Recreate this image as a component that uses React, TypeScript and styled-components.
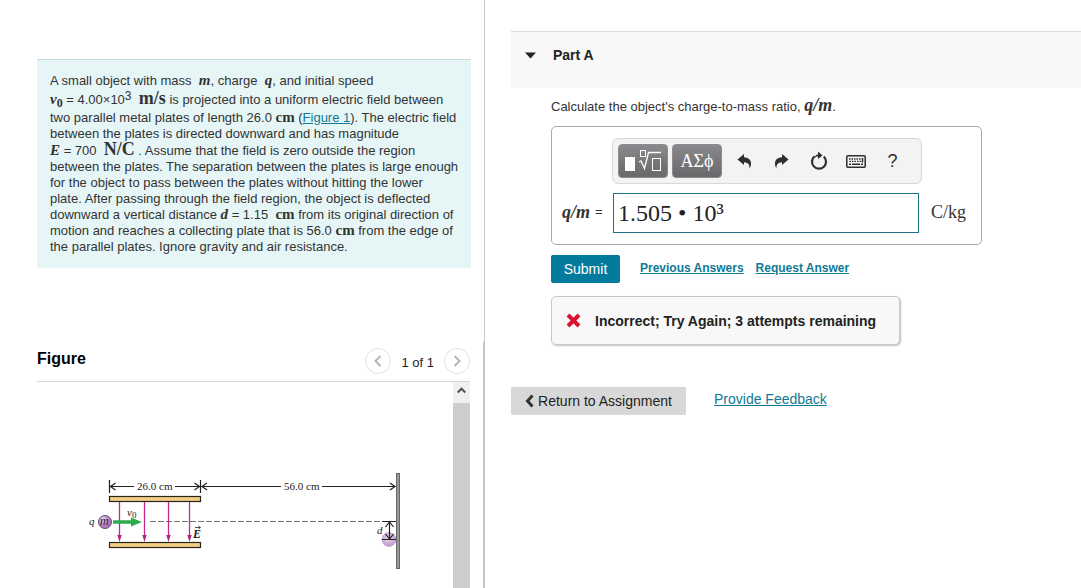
import React from "react";
import styled, { createGlobalStyle, css } from "styled-components";

const sans = `"Liberation Sans", Arial, sans-serif`;
const serif = `"Liberation Serif", "Times New Roman", serif`;

const GlobalStyle = createGlobalStyle`
  *, *::before, *::after { box-sizing: border-box; }
  body { margin: 0; background: #fff; color: #333; font-family: ${sans}; font-size: 13px; line-height: 16px; }
  button, input { font-family: inherit; }
  p, h1, h2 { margin: 0; }
`;

const Page = styled.div`
  display: grid;
  grid-template-columns: 485fr 596fr;
  min-height: 100vh;
`;

const ProblemColumn = styled.div`
  display: flex;
  flex-direction: column;
  min-width: 0;
  padding-top: 59px;
  border-right: 1px solid #c4c7c9;
`;

const Problem = styled.section`
  margin: 0 13px 0 37px;
  padding: 13px 0 13px 13px;
  border-top: 1px solid #c9dcdc;
  background: #e6f6f7;
  white-space: nowrap;
`;

const Line = styled.span<{ $height?: number }>`
  display: block;
  height: ${(p) => p.$height ?? 16}px;
  line-height: ${(p) => p.$height ?? 16}px;
`;

const Math = styled.span<{ $size?: number; $italic?: boolean; $weight?: number }>`
  font-family: ${serif};
  font-size: ${(p) => p.$size ?? 15}px;
  font-style: ${(p) => (p.$italic ? "italic" : "normal")};
  font-weight: ${(p) => p.$weight ?? 700};
  line-height: 0;
`;

const Sup = styled.sup`
  font-size: 12px;
  line-height: 0;
  vertical-align: 4px;
`;

const Sub = styled.sub`
  font-size: 12px;
  font-style: normal;
  line-height: 0;
  vertical-align: -3px;
`;

const Link = styled.a<{ $kind?: "strong" | "large" }>`
  color: #0f7a96;
  text-decoration: underline;
  ${(p) => p.$kind === "strong" && css`font-size: 12px; font-weight: 700;`}
  ${(p) => p.$kind === "large" && css`font-size: 14px;`}
`;

const FigurePanel = styled.section`
  display: flex;
  flex: 1;
  flex-direction: column;
  margin-top: 74px;
  padding-left: 37px;
  padding-right: 13px;
  border-right: 1px solid #c4c7c9;
`;

const FigureHeader = styled.header`
  display: flex;
  align-items: center;
  justify-content: space-between;
  height: 40px;
  padding-bottom: 2px;
  border-bottom: 1px solid #d6d6d6;
`;

const FigureTitle = styled.h2`
  color: #000;
  font-size: 16px;
  line-height: 20px;
  padding-bottom: 4px;
`;

const Pager = styled.div`
  display: flex;
  align-items: center;
  gap: 10px;
  color: #222;
`;

const PagerButton = styled.button`
  display: grid;
  place-items: center;
  width: 26px;
  height: 26px;
  padding: 0;
  border: 1px solid #e2dfe2;
  border-radius: 50%;
  background: #fff;
`;

const PageCount = styled.span`
  padding-top: 4px;
`;

const FigureBody = styled.div`
  display: flex;
  flex: 1;
  justify-content: space-between;
`;

const Drawing = styled.svg`
  display: block;
  margin: 83px 0 12px 43px;
`;

const ScrollTrack = styled.div`
  display: flex;
  flex-direction: column;
  width: 17px;
  background: #cdcdcd;
`;

const ScrollButton = styled.button`
  display: grid;
  place-items: center;
  height: 21px;
  padding: 0 0 4px;
  border: 0;
  background: #f0f0f0;
`;

const AnswerColumn = styled.main`
  min-width: 0;
  padding: 31px 0 20px 26px;
`;

const PartHeader = styled.header`
  display: flex;
  align-items: flex-start;
  gap: 17px;
  height: 57px;
  padding: 15px 14px;
  border-top: 1px solid #dcdcdc;
  background: #f8f8f8;
`;

const PartToggle = styled.button`
  display: grid;
  place-items: center;
  width: 11px;
  height: 16px;
  padding: 0;
  border: 0;
  background: none;
`;

const PartTitle = styled.h1`
  color: #222;
  font-size: 14px;
  line-height: 16px;
`;

const PartBody = styled.div`
  padding: 11px 12px 0 40px;
`;

const AnswerBox = styled.div`
  width: fit-content;
  max-width: 100%;
  margin-top: 11px;
  padding: 11px 15px 11px 10px;
  border: 1px solid #aaa;
  border-radius: 5px;
`;

const Toolbar = styled.div`
  display: flex;
  align-items: center;
  width: 310px;
  height: 46px;
  margin-left: 50px;
  padding: 0 10px 0 5px;
  border: 1px solid #d8d8d8;
  border-radius: 6px;
  background: #f3f3f3;
`;

const PaletteButton = styled.button`
  display: grid;
  place-items: center;
  width: 50px;
  height: 34px;
  margin-right: 4px;
  padding: 0;
  border: 1px solid #8b8b8f;
  border-radius: 4px;
  background: linear-gradient(#8a8a8d, #68686b);
  color: #fff;
  font-family: ${serif};
  font-size: 18px;
`;

const ToolButton = styled.button`
  display: grid;
  flex: 1;
  place-items: center;
  height: 34px;
  padding: 0;
  border: 0;
  background: none;
  color: #2f2f2f;
  font-size: 18px;
`;

const EntryRow = styled.div`
  display: flex;
  align-items: center;
  margin-top: 9px;
`;

const EntryLabel = styled.label`
  display: flex;
  align-items: center;
  gap: 5px;
  width: 51px;
  padding-bottom: 2px;
  white-space: nowrap;
`;

const Entry = styled.input`
  width: 306px;
  height: 40px;
  padding: 0 4px;
  border: 1px solid #1d7386;
  background: #fff;
  color: #222;
  font-family: ${serif};
  font-size: 24px;
`;

const Unit = styled.span`
  margin-left: 12px;
  padding-bottom: 3px;
  font-family: ${serif};
  font-size: 18px;
`;

const Actions = styled.div`
  display: flex;
  align-items: center;
  gap: 12px;
  margin-top: 10px;
`;

const ActionLink = styled.div`
  padding-bottom: 2px;
`;

const SubmitButton = styled.button`
  width: 69px;
  height: 28px;
  margin-right: 8px;
  padding: 0;
  border: 0;
  border-radius: 2px;
  background: #047a9c;
  color: #fff;
  font-size: 14px;
`;

const Feedback = styled.div`
  display: flex;
  align-items: center;
  gap: 14px;
  width: fit-content;
  min-width: 349px;
  height: 49px;
  margin-top: 13px;
  padding: 0 14px;
  border: 1px solid #c7c7c7;
  border-radius: 5px;
  background: #f8f8f8;
  box-shadow: 1px 1px 2px #c0c0c0;
  color: #222;
  font-size: 14px;
  font-weight: 700;
`;

const Footer = styled.footer`
  display: flex;
  gap: 28px;
  margin-top: 42px;
`;

const ReturnButton = styled.button`
  display: flex;
  align-items: center;
  justify-content: center;
  gap: 4px;
  width: 175px;
  height: 28px;
  padding: 0;
  border: 0;
  border-radius: 1px;
  background: #d8d8d8;
  color: #222;
  font-size: 14px;
`;

const FooterLink = styled.div`
  padding-top: 4px;
`;

const Chevron = ({ right }: { right?: boolean }) => (
  <svg width="8" height="12" viewBox="0 0 8 12" fill="none" stroke="#b5b5b5" strokeWidth="2">
    <path d={right ? "M1.5 1 6.5 6 1.5 11" : "M6.5 1 1.5 6 6.5 11"} />
  </svg>
);

const TemplateIcon = () => (
  <svg width="38" height="24" viewBox="0 0 38 24" fill="none" stroke="#fff">
    <rect x="1" y="8" width="10" height="14" fill="#fff" stroke="none" />
    <rect x="16.5" y="1.5" width="5" height="6" />
    <path d="M15 13 17 12 20.500 19.500 24.500 3.500H37" strokeWidth="1.300" />
    <rect x="28.500" y="9.500" width="8" height="12" />
  </svg>
);

const ArrowIcon = ({ redo }: { redo?: boolean }) => (
  <svg width="15" height="16" viewBox="0 0 15 16" fill="#2f2f2f">
    <path
      transform={redo ? "translate(15 0) scale(-1 1)" : undefined}
      d="M.5 6.500 7 1V4.300C11.500 4.500 14 7 14 10.500 14 12.500 13.500 14 12.500 15.500 12.800 11.500 11 9.300 7 9.200V12Z"
    />
  </svg>
);

const ResetIcon = () => (
  <svg width="18" height="20" viewBox="0 0 18 20" fill="none">
    <path d="M4.600 5.300A7 7 0 1 0 13.800 5.600" stroke="#2f2f2f" strokeWidth="2.200" />
    <path d="M8 .5 12.500 4.500 8 8V5.500C6.500 5.500 5.500 6 4.500 6.800 5 4.800 6.200 3.600 8 3.400Z" fill="#2f2f2f" />
  </svg>
);

const KeyboardIcon = () => (
  <svg width="20" height="13" viewBox="0 0 20 13" fill="none" stroke="#2f2f2f">
    <rect x=".8" y=".8" width="18.400" height="11.400" rx="1" strokeWidth="1.500" />
    <path d="M3 4H15M3.500 6.300H15" strokeWidth="1.300" strokeDasharray="1.500 1" />
    <path d="M3 9.300H5M6 9.300H14M15 9.300H17M16.500 3V7.500" strokeWidth="1.500" />
  </svg>
);

const CrossIcon = () => (
  <svg width="15" height="15" viewBox="0 0 15 15" stroke="#d9122f" strokeWidth="4">
    <path d="M2 2 13 13M13 2 2 13" />
  </svg>
);

const PlateDiagram = () => (
  <Drawing width="330" height="110" viewBox="0 0 330 110" role="img" aria-label="Charged object passing between parallel plates">
    <defs>
      <radialGradient id="ball" cx="35%" cy="30%">
        <stop offset="0" stopColor="#f0daf4" />
        <stop offset="1" stopColor="#ae78be" />
      </radialGradient>
      <radialGradient id="paleBall" cx="45%" cy="40%">
        <stop offset="0" stopColor="#ead8f0" />
        <stop offset="1" stopColor="#c5a3d3" />
      </radialGradient>
    </defs>
    <g fill="none" stroke="#222" strokeWidth="1.200">
      <path d="M29.500 15V28M120.500 15V28M30 21.500H54M95 21.500H120M121 21.500H201M242 21.500H315" />
      <path d="M35.500 18 30.500 21.500 35.500 25M114.500 18 119.500 21.500 114.500 25M127 18 122 21.500 127 25M310 18 315 21.500 310 25" />
    </g>
    <g fill="#f2cd87" stroke="#2d2418" strokeWidth="1.200">
      <rect x="29.500" y="31.500" width="91" height="5" />
      <rect x="29.500" y="77.500" width="91" height="5" />
    </g>
    <path d="M70 56.500H306" stroke="#777" strokeDasharray="6 2" />
    {[39.5, 64.5, 88.5, 109.5].map((x) => (
      <g key={x}>
        <path d={`M${x} 37V73`} stroke="#c0288a" strokeWidth="1.300" />
        <path d={`M${x - 2.2} 70H${x + 2.2}L${x} 77Z`} fill="#b3207e" />
      </g>
    ))}
    <path d="M33 55.300H51V52.500L62 57 51 61.500V58.700H33Z" fill="#2eab4c" />
    <circle cx="25" cy="57" r="6.500" fill="url(#ball)" stroke="#6f457b" />
    <circle cx="309" cy="74.500" r="7" fill="url(#paleBall)" stroke="#a98ab5" strokeWidth=".5" />
    <g fill="none" stroke="#222" strokeWidth="1.200">
      <path d="M302 56.500H316M302 74.500H316M309.500 57V74M305.500 62 309.500 57 313.500 62M305.500 69 309.500 74 313.500 69" />
    </g>
    <rect x="316.500" y="8.500" width="3" height="95" fill="#999" stroke="#666" />
    <g fill="#222" fontFamily={serif} fontSize="11">
      <text x="57" y="25">26.0 cm</text>
      <text x="204" y="25">56.0 cm</text>
      <g fontStyle="italic">
        <text x="9" y="60">q</text>
        <text x="20" y="60" fontSize="12">m</text>
        <text x="47" y="51">v</text>
        <text x="52" y="53" fontSize="9" fontStyle="normal">0</text>
        <text x="113" y="73" fontWeight="700" fontSize="12">E</text>
        <text x="297" y="69">d</text>
      </g>
      <path d="M115 62.500H120M118.500 61 120.500 62.500 118.500 64" fill="none" stroke="#222" strokeWidth=".8" />
    </g>
  </Drawing>
);

export default function App() {
  return (
    <>
      <GlobalStyle />
      <Page>
        <ProblemColumn>
          <Problem>
            <p>
              <Line>A small object with mass&nbsp; <Math $italic>m</Math>, charge&nbsp; <Math $italic>q</Math>, and initial speed </Line>
              <Line $height={21}>
                <Math $italic>v<Sub>0</Sub></Math> = 4.00×10<Sup>3</Sup>&nbsp; <Math $size={18}>m/s</Math> is projected into a uniform electric field between{" "}
              </Line>
              <Line>two parallel metal plates of length 26.0 <Math>cm</Math> (<Link href="#figure">Figure 1</Link>). The electric field </Line>
              <Line>between the plates is directed downward and has magnitude </Line>
              <Line $height={17}>
                <Math $italic>E</Math> = 700&nbsp; <Math $size={18}>N/C</Math> . Assume that the field is zero outside the region{" "}
              </Line>
              <Line>between the plates. The separation between the plates is large enough </Line>
              <Line>for the object to pass between the plates without hitting the lower </Line>
              <Line>plate. After passing through the field region, the object is deflected </Line>
              <Line>downward a vertical distance <Math $italic>d</Math> = 1.15&nbsp; <Math>cm</Math> from its original direction of </Line>
              <Line>motion and reaches a collecting plate that is 56.0 <Math>cm</Math> from the edge of </Line>
              <Line>the parallel plates. Ignore gravity and air resistance.</Line>
            </p>
          </Problem>
          <FigurePanel id="figure">
            <FigureHeader>
              <FigureTitle>Figure</FigureTitle>
              <Pager>
                <PagerButton aria-label="Previous figure"><Chevron /></PagerButton>
                <PageCount>1 of 1</PageCount>
                <PagerButton aria-label="Next figure"><Chevron right /></PagerButton>
              </Pager>
            </FigureHeader>
            <FigureBody>
              <PlateDiagram />
              <ScrollTrack>
                <ScrollButton aria-label="Scroll up">
                  <svg width="9" height="7" viewBox="0 0 9 7" fill="none" stroke="#505050" strokeWidth="2">
                    <path d="M.7 5.500 4.500 1.700 8.300 5.500" />
                  </svg>
                </ScrollButton>
              </ScrollTrack>
            </FigureBody>
          </FigurePanel>
        </ProblemColumn>
        <AnswerColumn>
          <PartHeader>
            <PartToggle aria-label="Collapse Part A">
              <svg width="11" height="7" viewBox="0 0 11 7" fill="#222"><path d="M0 .5H11L5.500 6.500Z" /></svg>
            </PartToggle>
            <PartTitle>Part A</PartTitle>
          </PartHeader>
          <PartBody>
            <p>Calculate the object's charge-to-mass ratio, <Math $italic $size={18}>q/m</Math>.</p>
            <AnswerBox>
              <Toolbar>
                <PaletteButton aria-label="Templates"><TemplateIcon /></PaletteButton>
                <PaletteButton>ΑΣϕ</PaletteButton>
                <ToolButton aria-label="Undo"><ArrowIcon /></ToolButton>
                <ToolButton aria-label="Redo"><ArrowIcon redo /></ToolButton>
                <ToolButton aria-label="Reset"><ResetIcon /></ToolButton>
                <ToolButton aria-label="Keyboard shortcuts"><KeyboardIcon /></ToolButton>
                <ToolButton>?</ToolButton>
              </Toolbar>
              <EntryRow>
                <EntryLabel htmlFor="answer"><Math $italic $size={18}>q/m</Math> =</EntryLabel>
                <Entry id="answer" defaultValue="1.505 • 10³" />
                <Unit>C/kg</Unit>
              </EntryRow>
            </AnswerBox>
            <Actions>
              <SubmitButton>Submit</SubmitButton>
              <ActionLink><Link $kind="strong" href="#previous">Previous Answers</Link></ActionLink>
              <ActionLink><Link $kind="strong" href="#request">Request Answer</Link></ActionLink>
            </Actions>
            <Feedback role="status"><CrossIcon />Incorrect; Try Again; 3 attempts remaining</Feedback>
          </PartBody>
          <Footer>
            <ReturnButton>
              <svg width="9" height="14" viewBox="0 0 9 14" fill="none" stroke="#333" strokeWidth="3"><path d="M7.500 1.500 2.500 7 7.500 12.500" /></svg>
              Return to Assignment
            </ReturnButton>
            <FooterLink><Link $kind="large" href="#feedback">Provide Feedback</Link></FooterLink>
          </Footer>
        </AnswerColumn>
      </Page>
    </>
  );
}
